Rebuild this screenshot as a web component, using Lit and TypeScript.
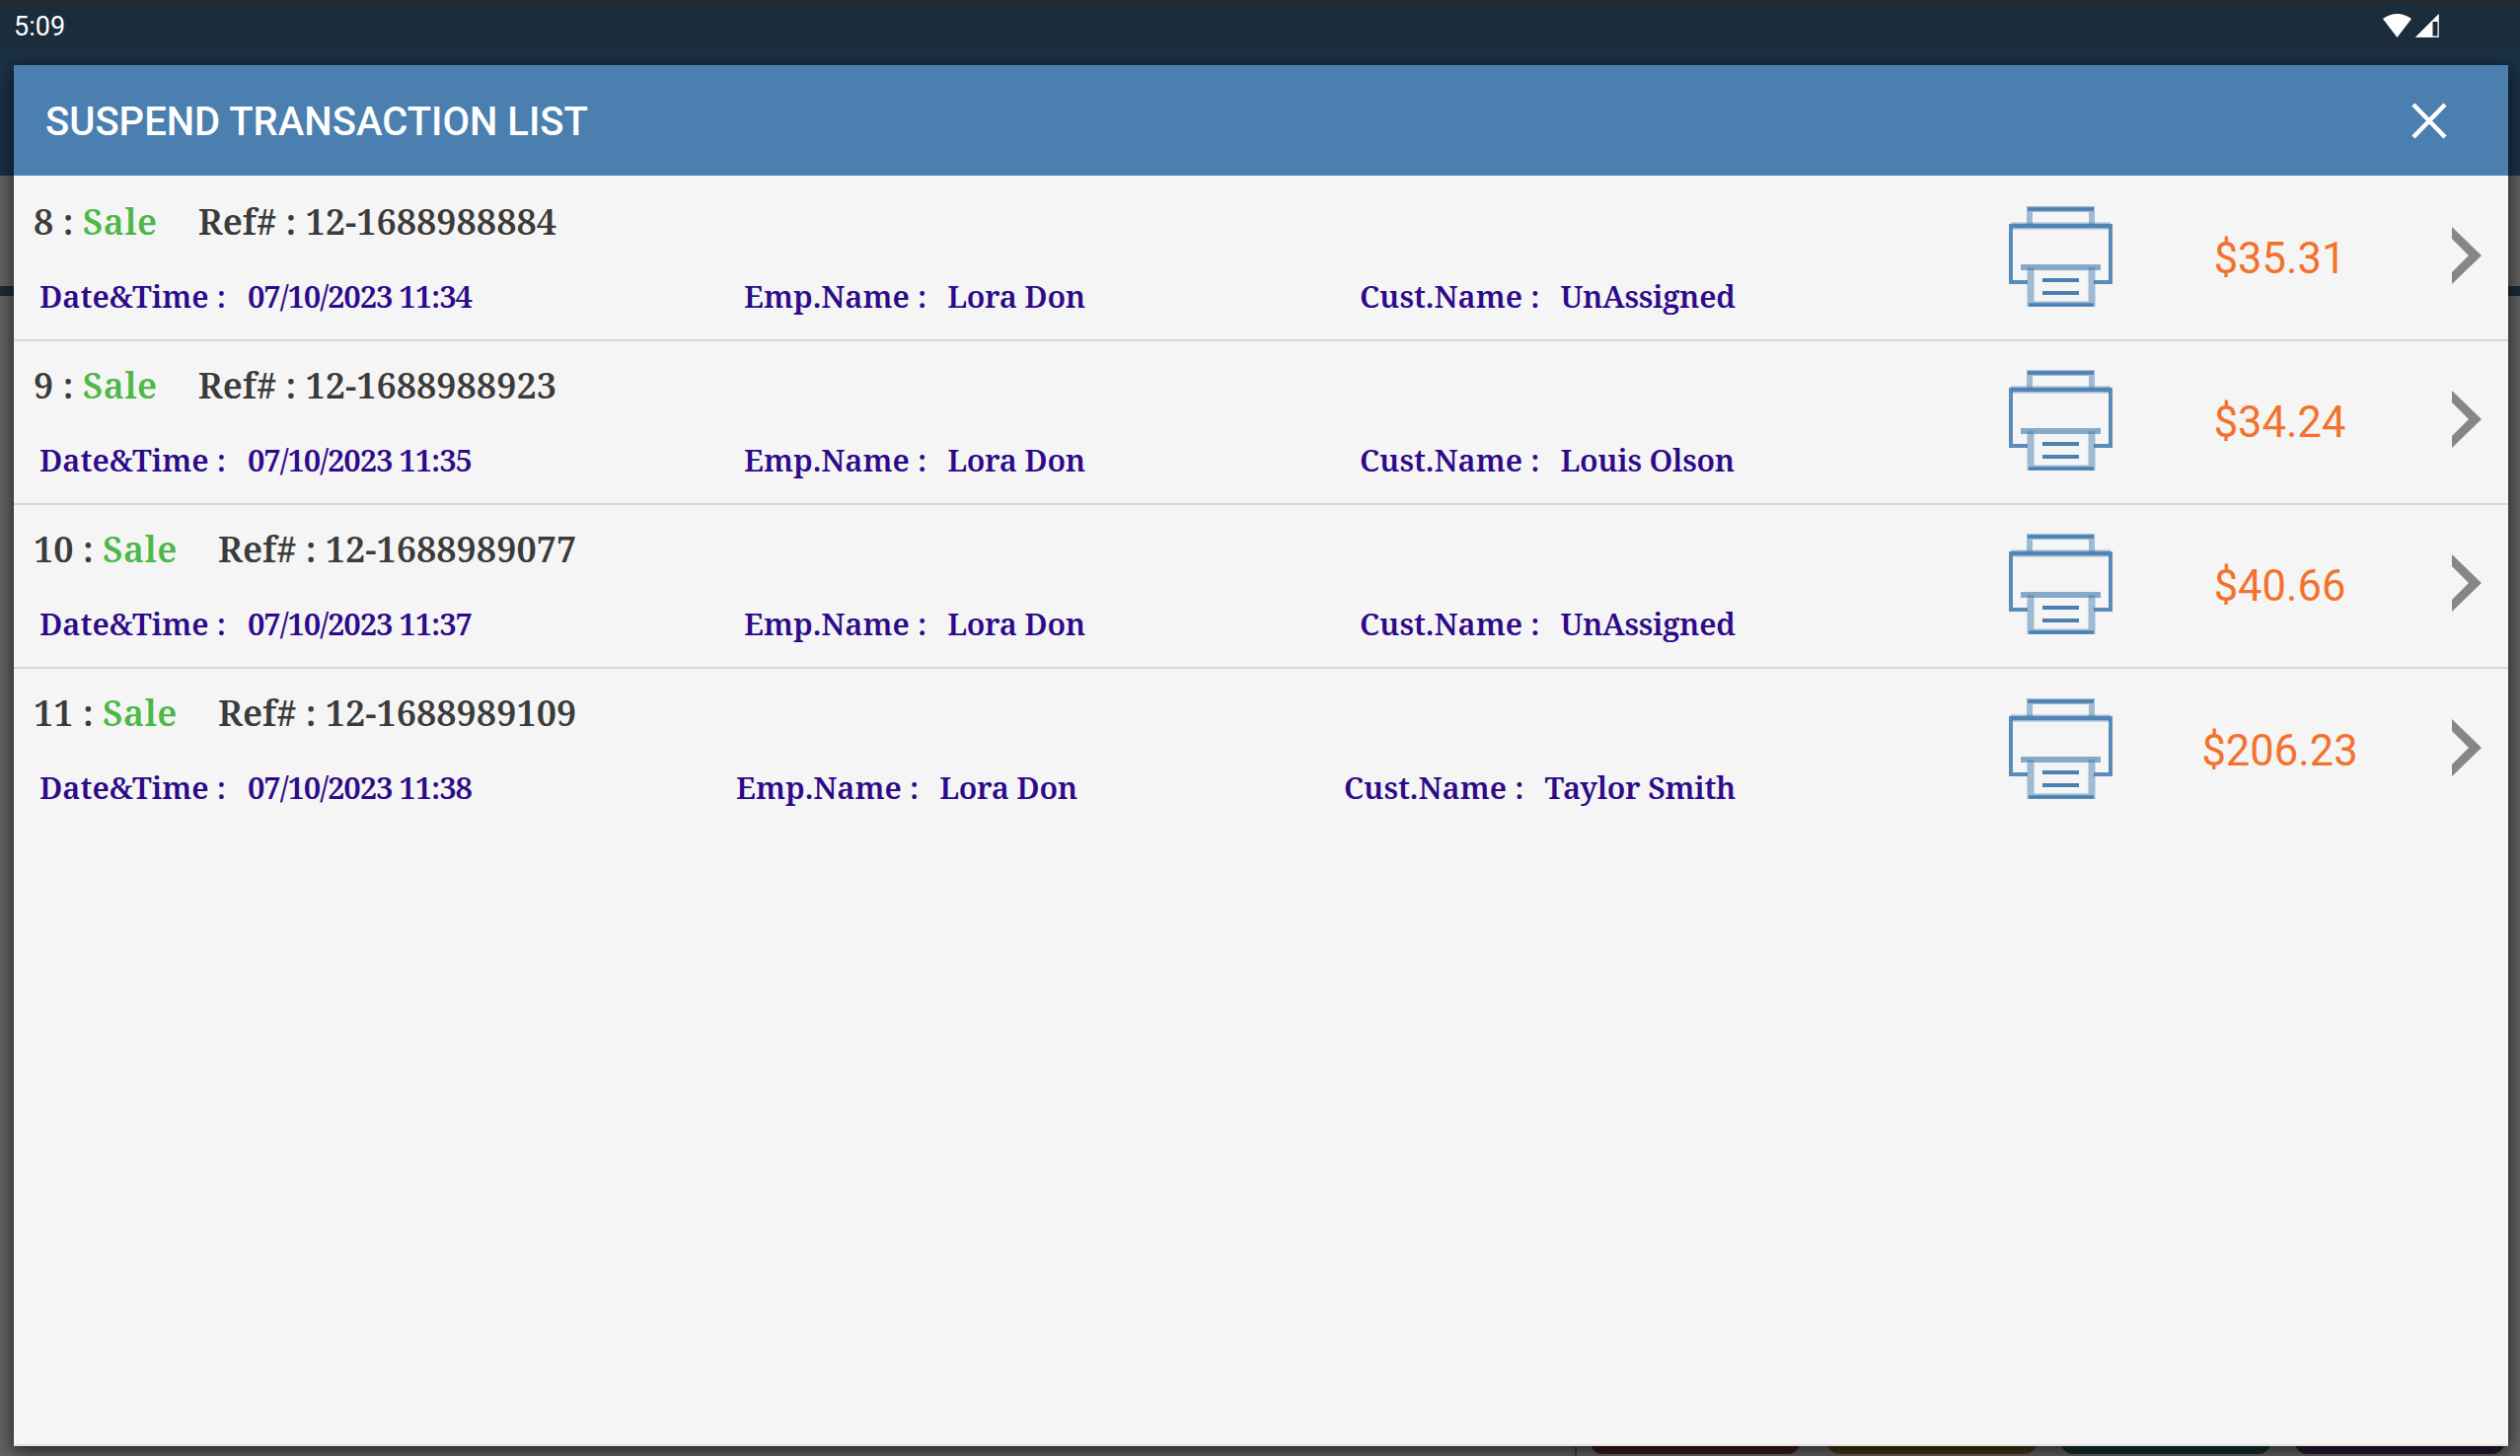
import { LitElement, html, css, svg } from "lit";
import { customElement } from "lit/decorators.js";

interface Row { n: string; ref: string; date: string; emp: string; cust: string; price: string; wide?: boolean; }
const rows: Row[] = [
  { n: "8", ref: "12-1688988884", date: "07/10/2023 11:34", emp: "Lora Don", cust: "UnAssigned", price: "$35.31" },
  { n: "9", ref: "12-1688988923", date: "07/10/2023 11:35", emp: "Lora Don", cust: "Louis Olson", price: "$34.24" },
  { n: "10", ref: "12-1688989077", date: "07/10/2023 11:37", emp: "Lora Don", cust: "UnAssigned", price: "$40.66" },
  { n: "11", ref: "12-1688989109", date: "07/10/2023 11:38", emp: "Lora Don", cust: "Taylor Smith", price: "$206.23", wide: true },
];

const printer = svg`<svg class="printer" viewBox="0 0 107 102" width="107" height="102" fill="none" stroke="#4a80b2">
  <path d="M22 20V3H85V20" stroke-width="6" stroke-opacity=".5"/>
  <path d="M20 3H87" stroke-width="3.500"/>
  <path d="M20 77H3V20H104V77H87" stroke-width="4" stroke-opacity=".9"/>
  <path d="M3 20H104" stroke-width="7" stroke-opacity=".5"/>
  <path d="M13 62H94" stroke-width="6" stroke-opacity=".65"/>
  <path d="M23 62V100H85V62" stroke-width="7" stroke-opacity=".5"/>
  <path d="M21 100H87" stroke-width="3.500"/>
  <path d="M35 75H72M35 88H72" stroke-width="4"/>
</svg>`;

@customElement("app-root")
export class AppRoot extends LitElement {
  static styles = css`
    :host { display: block; position: relative; width: 2554px; height: 1476px; overflow: hidden; background: #636363; font-family: "Noto Serif", "DejaVu Serif", "Liberation Serif", serif; }
    .status { height: 50px; background: #1b2c3b; box-shadow: inset 0 2px 0 #2a2a2a; display: flex; align-items: center; justify-content: space-between; padding: 3px 82px 0 14px; box-sizing: border-box; color: #fff; font: 400 27px "Roboto", sans-serif; }
    .status svg { display: block; margin-top: -3px; }
    .band { height: 128px; background: #1b3147; }
    .strip { position: absolute; left: 0; right: 0; top: 290px; height: 10px; background: #1b2c3b; }
    .seam { position: absolute; left: 1596px; bottom: 0; height: 12px; width: 2px; background: #444; }
    .tab { position: absolute; bottom: 2px; height: 12px; width: 212px; border-radius: 0 0 16px 16px; }
    .tab.a { left: 1612px; background: #3e1a1c; }
    .tab.b { left: 1852px; background: #463a14; }
    .tab.c { left: 2089px; background: #16302f; }
    .tab.d { left: 2326px; background: #2a1a38; }
    .dialog { position: absolute; left: 14px; top: 66px; width: 2528px; height: 1400px; box-sizing: border-box; background: #f5f5f5; border-bottom: 2px solid #e2e2e2; box-shadow: 0 4px 18px rgba(0,0,0,.75); display: flex; flex-direction: column; }
    .head { height: 112px; flex: none; box-sizing: border-box; background: #4a7faf; display: flex; align-items: center; justify-content: space-between; padding: 0 62px 0 32px; color: #fff; }
    .title { font: 500 40px "Roboto", sans-serif; margin-top: 3px; }
    .list { padding-top: 2px; }
    .row { height: 166px; box-sizing: border-box; border-bottom: 2px solid #d8d8d8; display: grid; grid-template-columns: 2021px 107px 343px 57px; align-items: center; }
    .row:last-child { border-bottom: none; }
    .info { padding: 20px 0 0 20px; align-self: start; }
    .line1 { display: block; font-size: 36px; font-weight: 600; color: #3b3b3b; white-space: pre; line-height: 50px; }
    .sale { color: #4cb848; letter-spacing: .6px; }
    .ref { margin-left: 41px; }
    .line2 { display: grid; grid-template-columns: 714px 624px auto; margin: 30px 0 0 6px; color: #2e0a8a; font-size: 31px; font-weight: 600; line-height: 40px; white-space: pre; }
    .line2.wide { grid-template-columns: 706px 616px auto; }
    .val { margin-left: 21px; letter-spacing: -.3px; }
    .date { letter-spacing: -1.1px; margin-left: 22px; }
    .print { display: flex; margin-top: -5px; }
    .printer { flex: none; display: block; filter: blur(.5px); }
    .price { text-align: center; color: #f3722c; font: 400 43.500px "Roboto", sans-serif; margin: 1px 6px 0 0; }
    .chev { margin-top: -6px; }
    .chev svg { display: block; }
  `;
  render() {
    return html`
      <div class="status">
        <span>5:09</span>
        <svg width="57" height="25" viewBox="0 0 57 25">
          <path d="M0 6Q14.500 -4 29 6L14.500 25Z" fill="#fff"/>
          <path d="M33 25L56.500 1.500V25Z" fill="#fff" stroke="#cfd4d8" stroke-width="1"/>
          <path d="M50.500 9V23.500H55.500V9Z" fill="#1b2c3b"/>
        </svg>
      </div>
      <div class="band"></div>
      <div class="strip"></div>
      <div class="seam"></div>
      <div class="tab a"></div>
      <div class="tab b"></div>
      <div class="tab c"></div>
      <div class="tab d"></div>
      <div class="dialog">
        <div class="head">
          <span class="title">SUSPEND TRANSACTION LIST</span>
          <svg width="36" height="37" viewBox="0 0 36 37"><path d="M2 2L34 35M34 2L2 35" stroke="#fff" stroke-width="4.500" fill="none"/></svg>
        </div>
        <div class="list">
        ${rows.map(r => html`
          <div class="row">
            <div class="info">
              <span class="line1">${r.n} : <span class="sale">Sale</span><span class="ref">Ref# : ${r.ref}</span></span>
              <div class="line2 ${r.wide ? "wide" : ""}">
                <span>Date&Time :<span class="val date">${r.date}</span></span>
                <span>Emp.Name :<span class="val">${r.emp}</span></span>
                <span>Cust.Name :<span class="val">${r.cust}</span></span>
              </div>
            </div>
            <div class="print">${printer}</div>
            <div class="price">${r.price}</div>
            <div class="chev"><svg width="30" height="58" viewBox="0 0 30 58"><path d="M0 0L30 29L0 58V46L17 29L0 12Z" fill="#868686"/></svg></div>
          </div>`)}
        </div>
      </div>`;
  }
}
